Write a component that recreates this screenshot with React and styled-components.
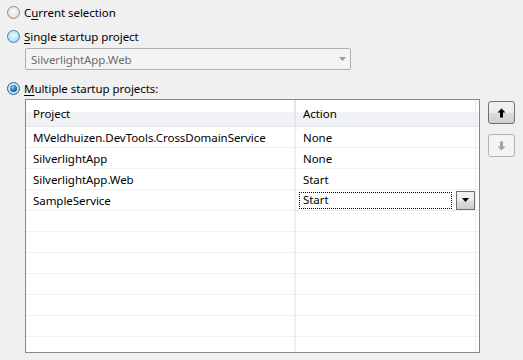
import React from "react";
import styled, { createGlobalStyle, css } from "styled-components";

const Global = createGlobalStyle`
  html, body {
    margin: 0;
    padding: 0;
    background: #f0f0f0;
  }
  body {
    font-family: "Segoe UI", "Noto Sans", "Open Sans", sans-serif;
    font-size: 11.5px;
    letter-spacing: -0.05px;
    color: #000;
  }
`;

const Page = styled.div`
  width: 523px;
  height: 360px;
  padding: 4px 0 0 7px;
  box-sizing: border-box;
  overflow: hidden;
`;

const RadioRow = styled.label`
  display: flex;
  align-items: center;
  gap: 4px;
  height: 16px;
  margin-bottom: ${(p) => p.$gap || 0}px;
  white-space: nowrap;
`;

const radioLooks = {
  off: css`
    border: 1px solid #8e8f8f;
    background: radial-gradient(circle at 50% 40%, #fbfbfb 0%, #e8e8e8 55%, #c9c9c9 100%);
  `,
  hover: css`
    border: 1px solid #3c7fb1;
    background: radial-gradient(circle at 50% 40%, #eaf6fd 0%, #bde6fd 55%, #8fcdf2 100%);
  `,
  on: css`
    border: 1px solid #2c628b;
    background: radial-gradient(circle at 50% 40%, #eaf6fd 0%, #c4e5f6 60%, #98cde6 100%);
  `,
};

const RadioCircle = styled.span`
  position: relative;
  width: 13px;
  height: 13px;
  box-sizing: border-box;
  border-radius: 50%;
  flex: none;
  ${(p) => radioLooks[p.$look]}

  ${(p) =>
    p.$look === "on" &&
    css`
      &::after {
        content: "";
        position: absolute;
        left: 2px;
        top: 2px;
        width: 7px;
        height: 7px;
        border-radius: 50%;
        background: radial-gradient(circle at 40% 35%, #97d9f8 0%, #2b7bb8 45%, #0b3d6e 100%);
      }
    `}
`;

const Key = styled.span`
  text-decoration: underline;
  text-underline-offset: 2px;
`;

const DisabledCombo = styled.div`
  display: flex;
  align-items: center;
  justify-content: space-between;
  width: 326px;
  height: 22px;
  box-sizing: border-box;
  margin: 0 0 10px 18px;
  padding: 0 4px 0 5px;
  background: #f4f4f4;
  border: 1px solid #adb2b5;
  border-radius: 2px;
  color: #6d6d6d;
`;

const Body = styled.div`
  display: flex;
  align-items: flex-start;
  margin: 3px 0 0 18px;
`;

const Grid = styled.div`
  width: 455px;
  height: 254px;
  box-sizing: border-box;
  border: 1px solid #828790;
  background: #fff;
  overflow: hidden;
`;

const Row = styled.div`
  display: grid;
  grid-template-columns: 270px 180px;
  height: ${(p) => (p.$header ? 27 : 21)}px;
  box-sizing: border-box;
  border-bottom: 1px solid ${(p) => (p.$header ? "#e3e5e8" : "#f0f0f0")};
  ${(p) =>
    p.$header &&
    css`
      background: linear-gradient(#ffffff 0%, #ffffff 45%, #f2f3f5 46%, #f0f1f4 100%);
    `}
`;

const Cell = styled.div`
  display: flex;
  align-items: center;
  padding-left: 7px;
  gap: 4px;
  white-space: nowrap;
  overflow: hidden;
  border-right: ${(p) => (p.$first ? "2px solid #eef0f3" : "1px solid #eef0f3")};
  ${(p) =>
    p.$header &&
    css`
      border-right-color: ${p.$first ? "#e3e5e8" : "#e8eaed"};
    `}
  ${(p) =>
    p.$editing &&
    css`
      padding-left: 3px;
    `}
`;

const EditBox = styled.div`
  flex: 1;
  height: 17px;
  box-sizing: border-box;
  border: 1px dotted #000;
  padding-left: 3px;
  display: flex;
  align-items: center;
  line-height: 1;
`;

const DropButton = styled.div`
  width: 19px;
  height: 19px;
  box-sizing: border-box;
  border: 1px solid #707070;
  background: linear-gradient(#f2f2f2 0%, #ebebeb 50%, #dddddd 51%, #cfcfcf 100%);
  display: flex;
  align-items: center;
  justify-content: center;
`;

const Side = styled.div`
  display: flex;
  flex-direction: column;
  gap: 10px;
  margin: 2px 0 0 8px;
`;

const MoveButton = styled.div`
  width: 27px;
  height: 23px;
  box-sizing: border-box;
  border-radius: 3px;
  display: flex;
  align-items: center;
  justify-content: center;
  ${(p) =>
    p.$disabled
      ? css`
          border: 1px solid #adb2b5;
          background: #f4f4f4;
        `
      : css`
          border: 1px solid #707070;
          background: linear-gradient(#f2f2f2 0%, #ebebeb 50%, #dddddd 51%, #cfcfcf 100%);
        `}
`;

const Arrow = ({ down, color }) => (
  <svg width="9" height="10" viewBox="0 0 9 10" style={{ transform: down ? "rotate(180deg)" : "none" }}>
    <path d="M4.5 0.5 L8.5 4.5 L6 4.5 L6 9.5 L3 9.5 L3 4.5 L0.5 4.5 Z" fill={color} />
  </svg>
);

const Caret = ({ color, w = 7 }) => (
  <svg width={w} height="4" viewBox="0 0 7 4">
    <path d="M0 0 L7 0 L3.5 4 Z" fill={color} />
  </svg>
);

const projects = [
  { name: "MVeldhuizen.DevTools.CrossDomainService", action: "None" },
  { name: "SilverlightApp", action: "None" },
  { name: "SilverlightApp.Web", action: "Start" },
  { name: "SampleService", action: "Start", editing: true },
];

export default function App() {
  const empty = Array.from({ length: 7 });
  return (
    <>
      <Global />
      <Page>
        <RadioRow $gap={8}>
          <RadioCircle $look="off" />
          <span>
            C<Key>u</Key>rrent selection
          </span>
        </RadioRow>
        <RadioRow $gap={4}>
          <RadioCircle $look="hover" />
          <span>
            <Key>S</Key>ingle startup project
          </span>
        </RadioRow>
        <DisabledCombo>
          <span>SilverlightApp.Web</span>
          <Caret color="#9c9c9c" />
        </DisabledCombo>
        <RadioRow>
          <RadioCircle $look="on" />
          <span>
            <Key>M</Key>ultiple startup projects:
          </span>
        </RadioRow>
        <Body>
          <Grid>
            <Row $header>
              <Cell $header $first>Project</Cell>
              <Cell $header>Action</Cell>
            </Row>
            {projects.map((p) => (
              <Row key={p.name}>
                <Cell $first>{p.name}</Cell>
                {p.editing ? (
                  <Cell $editing>
                    <EditBox>{p.action}</EditBox>
                    <DropButton>
                      <Caret color="#000" />
                    </DropButton>
                  </Cell>
                ) : (
                  <Cell>{p.action}</Cell>
                )}
              </Row>
            ))}
            {empty.map((_, i) => (
              <Row key={i}>
                <Cell $first />
                <Cell />
              </Row>
            ))}
          </Grid>
          <Side>
            <MoveButton>
              <Arrow color="#000" />
            </MoveButton>
            <MoveButton $disabled>
              <Arrow down color="#a0a0a0" />
            </MoveButton>
          </Side>
        </Body>
      </Page>
    </>
  );
}
